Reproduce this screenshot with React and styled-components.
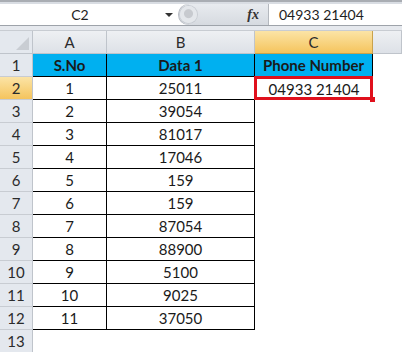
import styled, { createGlobalStyle } from "styled-components";

const GlobalStyle = createGlobalStyle`
  html, body {
    margin: 0;
    padding: 0;
    background: #ffffff;
    overflow: hidden;
  }
  body {
    font-family: Lato, "Open Sans", "Liberation Sans", sans-serif;
  }
`;

const rows = [
  [1, 25011],
  [2, 39054],
  [3, 81017],
  [4, 17046],
  [5, 159],
  [6, 159],
  [7, 87054],
  [8, 88900],
  [9, 5100],
  [10, 9025],
  [11, 37050],
];

const Page = styled.div`
  width: 402px;
  height: 352px;
  overflow: hidden;
  background: #ffffff;
`;

const TopStrip = styled.div`
  height: 4px;
  background: linear-gradient(#a9adb3 0 2px, #d9dde3 2px);
`;

const FormulaBar = styled.div`
  display: flex;
  height: 21px;
  background: #ffffff;
  border-bottom: 1px solid #9ea3aa;
`;

const NameBox = styled.div`
  width: 160px;
  display: flex;
  align-items: center;
  justify-content: center;
  font-size: 14px;
  color: #1e1e1e;
`;

const DropArrow = styled.div`
  width: 18px;
  display: flex;
  align-items: center;
  justify-content: center;
  &::after {
    content: "";
    border-left: 4px solid transparent;
    border-right: 4px solid transparent;
    border-top: 4px solid #333;
  }
`;

const ButtonArea = styled.div`
  width: 81px;
  display: flex;
  align-items: center;
  justify-content: space-between;
  padding-right: 9px;
  background: linear-gradient(#e8ebef, #d6dae0);
  border-radius: 11px 0 0 11px;
  box-shadow: inset 1px 0 0 #b8bcc3;
`;

const Knob = styled.div`
  width: 17px;
  height: 17px;
  margin-left: 2px;
  border-radius: 50%;
  background: radial-gradient(circle at 50% 45%, #c7cacf 0 4px, #e4e7eb 5px);
  box-shadow: 0 0 0 1px #c9cdd3;
`;

const Fx = styled.span`
  font-family: "Liberation Serif", serif;
  font-style: italic;
  font-weight: bold;
  font-size: 14px;
  color: #333;
`;

const FormulaInput = styled.div`
  flex: 1;
  display: flex;
  align-items: center;
  padding-left: 10px;
  border-left: 1px solid #b4b8be;
  font-size: 14px;
  color: #1e1e1e;
`;

const Gap = styled.div`
  height: 4px;
  background: #e6e9ee;
  border-bottom: 1px solid #c8ccd2;
`;

const Grid = styled.div`
  display: grid;
  grid-template-columns: 33px 74px 148px 118px 1fr;
  grid-auto-rows: 23px;
`;

const Corner = styled.div`
  background: #e4e8ee;
  border-right: 1px solid #bfc4cb;
  border-bottom: 1px solid #bfc4cb;
  position: relative;
  &::after {
    content: "";
    position: absolute;
    right: 3px;
    bottom: 3px;
    border-left: 13px solid transparent;
    border-bottom: 13px solid #c9cdd3;
  }
`;

const ColHead = styled.div`
  display: flex;
  align-items: center;
  justify-content: center;
  font-size: 15px;
  color: #2b2b2b;
  background: ${(p) =>
    p.$active ? "linear-gradient(#fbe4a6, #f5c45d)" : "linear-gradient(#eef0f3, #dde1e7)"};
  border-right: 1px solid ${(p) => (p.$active ? "#c9a24c" : "#bfc4cb")};
  border-bottom: 1px solid ${(p) => (p.$active ? "#c9a24c" : "#bfc4cb")};
`;

const RowHead = styled.div`
  display: flex;
  align-items: center;
  justify-content: center;
  font-size: 15px;
  color: #2b2b2b;
  background: ${(p) =>
    p.$active ? "linear-gradient(#fbe4a6, #f5c45d)" : "#e4e8ee"};
  border-right: 1px solid #bfc4cb;
  border-bottom: 1px solid #c8ccd2;
`;

const Cell = styled.div`
  position: relative;
  display: flex;
  align-items: center;
  justify-content: center;
  font-size: 15px;
  color: #1a1a1a;
  border-right: 1px solid #000;
  border-bottom: 1px solid #000;
  background: #ffffff;
`;

const HeadCell = styled(Cell)`
  background: #00b0f0;
  font-weight: bold;
  color: #1a1a1a;
`;

const Selected = styled(Cell)`
  border: none;
  &::after {
    content: "";
    position: absolute;
    inset: -1px 0 0 -1px;
    border: 3px solid #e0101c;
  }
  &::before {
    content: "";
    position: absolute;
    right: -2px;
    bottom: -2px;
    width: 5px;
    height: 5px;
    background: #e0101c;
    z-index: 1;
  }
`;

const Empty = styled.div`
  background: #ffffff;
`;

export default function App() {
  return (
    <Page>
      <GlobalStyle />
      <TopStrip />
      <FormulaBar>
        <NameBox>C2</NameBox>
        <DropArrow />
        <ButtonArea>
          <Knob />
          <Fx>fx</Fx>
        </ButtonArea>
        <FormulaInput>04933 21404</FormulaInput>
      </FormulaBar>
      <Gap />
      <Grid>
        <Corner />
        <ColHead>A</ColHead>
        <ColHead>B</ColHead>
        <ColHead $active>C</ColHead>
        <ColHead />

        <RowHead>1</RowHead>
        <HeadCell>S.No</HeadCell>
        <HeadCell>Data 1</HeadCell>
        <HeadCell>Phone Number</HeadCell>
        <Empty />

        {rows.map(([n, v], i) => (
          <Row key={n} index={i + 2} n={n} v={v} />
        ))}

        <RowHead>13</RowHead>
        <Empty />
        <Empty />
        <Empty />
        <Empty />
      </Grid>
    </Page>
  );
}

function Row({ index, n, v }) {
  const active = index === 2;
  return (
    <>
      <RowHead $active={active}>{index}</RowHead>
      <Cell>{n}</Cell>
      <Cell>{v}</Cell>
      {active ? <Selected>04933 21404</Selected> : <Empty />}
      <Empty />
    </>
  );
}
